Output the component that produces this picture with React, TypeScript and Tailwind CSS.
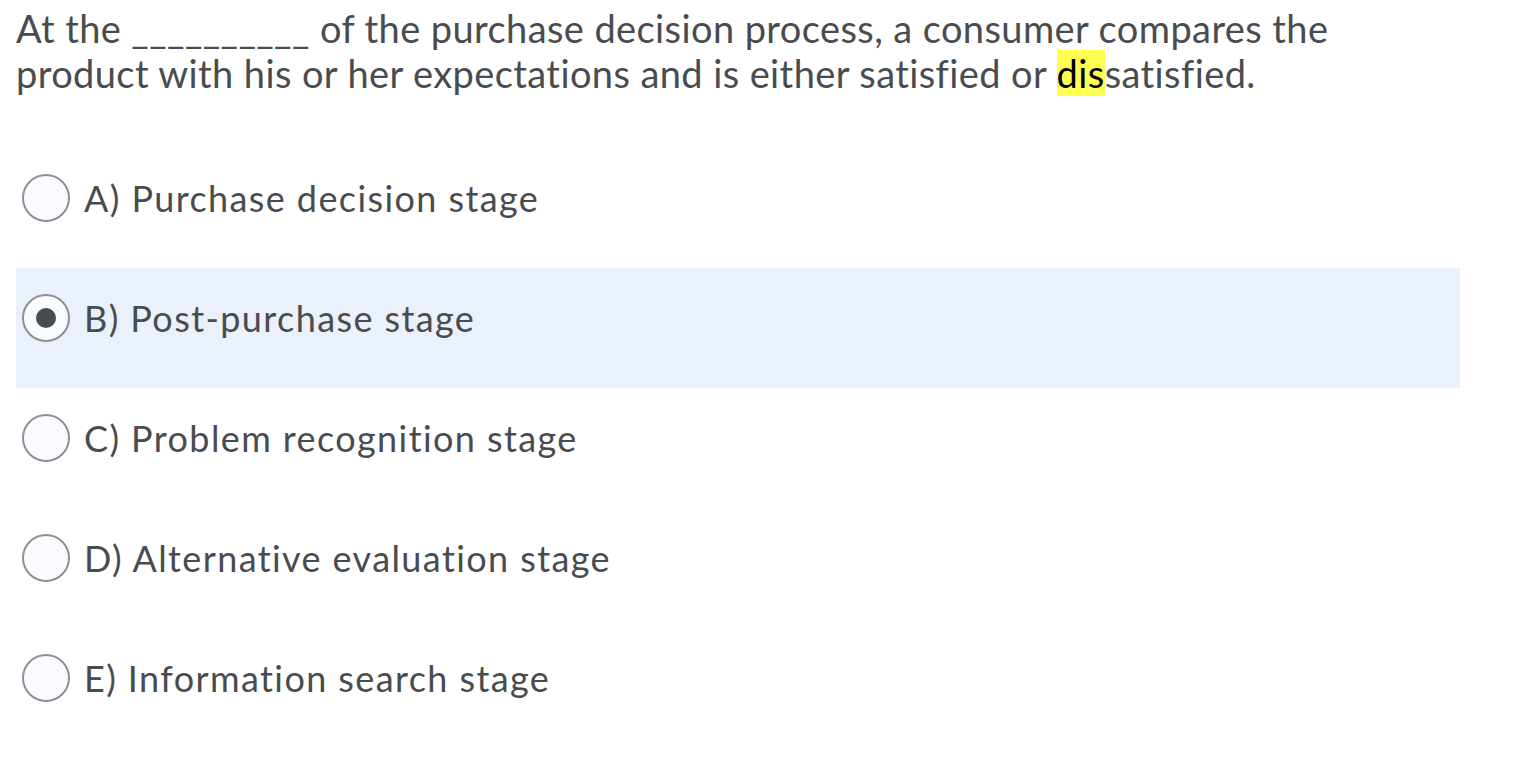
import React from "react";

const options = [
  { label: "A) Purchase decision stage", selected: false },
  { label: "B) Post-purchase stage", selected: true },
  { label: "C) Problem recognition stage", selected: false },
  { label: "D) Alternative evaluation stage", selected: false },
  { label: "E) Information search stage", selected: false },
];

export default function App() {
  return (
    <div
      className="w-[1520px] h-[774px] bg-white text-[#494c4e] overflow-hidden [font-variant-ligatures:none]"
      style={{ fontFamily: "Lato, 'Open Sans', sans-serif" }}
    >
      <div className="pl-[16px] pt-[6px] text-[38px] leading-[45px] tracking-[0.4px]">
        <div>At the __________ of the purchase decision process, a consumer compares the</div>
        <div>
          product with his or her expectations and is either satisfied or{" "}
          <span className="bg-[#ffff50] text-black">dis</span>satisfied.
        </div>
      </div>
      <div className="mt-[52px] w-[1444px] ml-[16px]">
        {options.map((o) => (
          <div
            key={o.label}
            className={`h-[120px] pt-[26px] pl-[6px] ${o.selected ? "bg-[#eaf1fb]" : ""}`}
          >
            <div className="flex items-center gap-[14px]">
              <div className="w-[48px] h-[48px] rounded-full border-2 border-[#8c9093] bg-[#f9fbff] flex items-center justify-center shrink-0">
                {o.selected && <div className="w-[20px] h-[20px] rounded-full bg-[#494c4e]" />}
              </div>
              <div className="text-[36px] leading-[44px] tracking-[1.4px]">{o.label}</div>
            </div>
          </div>
        ))}
      </div>
    </div>
  );
}
